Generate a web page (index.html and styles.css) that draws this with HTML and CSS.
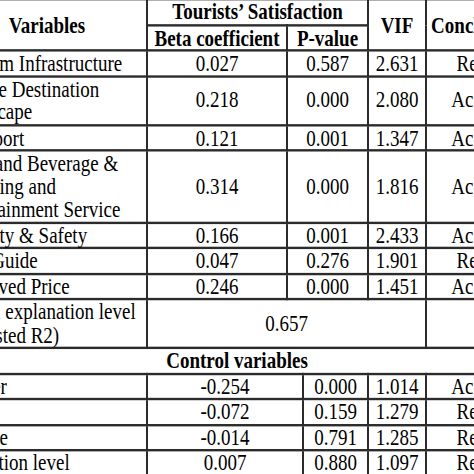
FILE: index.html
```html
<!DOCTYPE html>
<html lang="en">
<head>
    <meta charset="UTF-8">
    <meta name="viewport" content="width=device-width, initial-scale=1.0">
    <title>Regression Results</title>
    <link rel="stylesheet" href="styles.css">
</head>
<body>

    <div class="sheet">
        <table class="results">
            <colgroup>
                <col class="col-var">
                <col class="col-beta">
                <col class="col-gap">
                <col class="col-p">
                <col class="col-vif">
                <col class="col-end">
            </colgroup>
            <thead>
                <tr>
                    <th rowspan="2">Variables</th>
                    <th colspan="3">Tourists’ Satisfaction</th>
                    <th rowspan="2">VIF</th>
                    <th rowspan="2">Conclusion</th>
                </tr>
                <tr>
                    <th>Beta coefficient</th>
                    <th colspan="2">P-value</th>
                </tr>
            </thead>
            <tbody>
                <tr>
                    <td class="name">Tourism Infrastructure</td>
                    <td>0.027</td>
                    <td colspan="2">0.587</td>
                    <td>2.631</td>
                    <td class="verdict">Rejected</td>
                </tr>
                <tr>
                    <td class="name">Unique Destination Landscape</td>
                    <td>0.218</td>
                    <td colspan="2">0.000</td>
                    <td>2.080</td>
                    <td class="verdict">Accepted</td>
                </tr>
                <tr>
                    <td class="name">Transport</td>
                    <td>0.121</td>
                    <td colspan="2">0.001</td>
                    <td>1.347</td>
                    <td class="verdict">Accepted</td>
                </tr>
                <tr>
                    <td class="name">Food and Beverage &amp; Shopping and Entertainment Service</td>
                    <td>0.314</td>
                    <td colspan="2">0.000</td>
                    <td>1.816</td>
                    <td class="verdict">Accepted</td>
                </tr>
                <tr>
                    <td class="name">Security &amp; Safety</td>
                    <td>0.166</td>
                    <td colspan="2">0.001</td>
                    <td>2.433</td>
                    <td class="verdict">Accepted</td>
                </tr>
                <tr>
                    <td class="name">Tour Guide</td>
                    <td>0.047</td>
                    <td colspan="2">0.276</td>
                    <td>1.901</td>
                    <td class="verdict">Rejected</td>
                </tr>
                <tr>
                    <td class="name">Perceived Price</td>
                    <td>0.246</td>
                    <td colspan="2">0.000</td>
                    <td>1.451</td>
                    <td class="verdict">Accepted</td>
                </tr>
                <tr>
                    <td class="name">Model explanation level (Adjusted R2)</td>
                    <td colspan="4">0.657</td>
                    <td></td>
                </tr>
            </tbody>
            <tbody>
                <tr class="section">
                    <th colspan="6">Control variables</th>
                </tr>
                <tr>
                    <td class="name">Gender</td>
                    <td colspan="2">-0.254</td>
                    <td>0.000</td>
                    <td>1.014</td>
                    <td class="verdict">Accepted</td>
                </tr>
                <tr>
                    <td class="name">Age</td>
                    <td colspan="2">-0.072</td>
                    <td>0.159</td>
                    <td>1.279</td>
                    <td class="verdict">Rejected</td>
                </tr>
                <tr>
                    <td class="name">Income</td>
                    <td colspan="2">-0.014</td>
                    <td>0.791</td>
                    <td>1.285</td>
                    <td class="verdict">Rejected</td>
                </tr>
                <tr>
                    <td class="name">Education level</td>
                    <td colspan="2">0.007</td>
                    <td>0.880</td>
                    <td>1.097</td>
                    <td class="verdict">Rejected</td>
                </tr>
            </tbody>
        </table>
    </div>

</body>
</html>
```

FILE: styles.css
```css
* {
    margin: 0;
    padding: 0;
    box-sizing: border-box;
}
html {
    background-color: #fff;
}
body {
    min-height: 100vh;
    font-family: "Liberation Serif", "Times New Roman", serif;
    font-size: 19px;
    color: #000;
    background-color: #fff;
    overflow: hidden;
}
/* the scanned table is a bit taller than wide */
.sheet {
    height: 100vh;
    transform: scaleY(1.19);
    transform-origin: 0 0;
}
.results {
    width: 580px;
    margin: -2px 0 0 -54px;
    border-collapse: collapse;
    table-layout: fixed;
    line-height: 19.5px;
}
.results th, .results td {
    border: 2px solid #2b2b2b;
    padding: 0 3px;
    text-align: center;
    vertical-align: middle;
}
.results th {
    font-weight: bold;
}
.results .name {
    text-align: left;
}
.results .verdict {
    text-align: right;
}
.section th {
    border-left: none;
    border-right: none;
}
.col-var {
    width: 200px;
}
.col-beta {
    width: 140px;
}
.col-gap {
    width: 16px;
}
.col-p {
    width: 65px;
}
.col-vif {
    width: 58px;
}
.col-end {
    width: 101px;
}
```
